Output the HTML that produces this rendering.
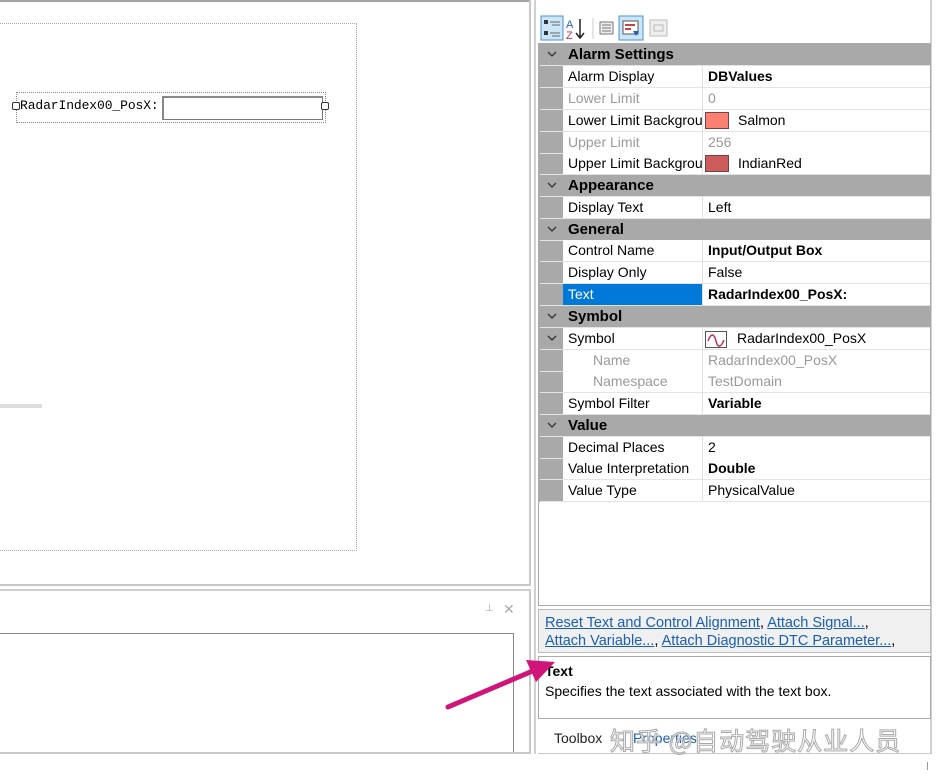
<!DOCTYPE html>
<html><head><meta charset="utf-8"><style>
*{margin:0;padding:0;box-sizing:border-box}
body{width:942px;height:777px;background:#fff;position:relative;overflow:hidden;font-family:"Liberation Sans",sans-serif;font-size:14px;color:#000}
.a{position:absolute}
.row{position:absolute;left:540px;width:390px;height:22px;border-bottom:1px solid #e4e4e4}
.hdr{background:#a9a9a9;font-weight:bold;font-size:15px}
.hdr .t{position:absolute;left:28px;top:2px}
.row .chev{position:absolute;left:5px;top:3px;width:14px;height:14px}
.n{position:absolute;left:23px;width:140px;height:21px;background:#fff;padding:2px 0 0 5px;white-space:nowrap;overflow:hidden;border-right:1px solid #e0e0e0}
.v{position:absolute;left:163px;width:227px;height:21px;background:#fff;padding:2px 0 0 5px;white-space:nowrap}
.g{color:#9a9a9a}
.b{font-weight:bold}
.sw{display:inline-block;width:24px;height:17px;border:1px solid #7a4040;vertical-align:-4px;margin:0 9px 0 -3px}
a{color:#1a5fb4;text-decoration:underline}
</style></head><body>
<svg width="0" height="0" style="position:absolute"><defs><symbol id="cv" viewBox="0 0 14 14"><path d="M3 5l4 4 4-4" stroke="#333" stroke-width="1.3" fill="none"/></symbol></defs></svg>
<!-- left area -->
<div class="a" style="left:0;top:0;width:531px;height:2px;background:#a3a3a3"></div>
<div class="a" style="left:529px;top:0;width:2px;height:585px;background:#c8c8c8"></div>
<div class="a" style="left:0;top:23px;width:357px;height:528px;border:1px dotted #aaa;border-left:none"></div>
<div class="a" style="left:16px;top:92px;width:310px;height:31px;border:1px dotted #888"></div>
<div class="a" style="left:12px;top:102px;width:8px;height:8px;border:1px solid #333;border-radius:2px;background:#fff"></div>
<div class="a" style="left:20px;top:98px;font-family:'Liberation Mono',monospace;font-size:13px;letter-spacing:-0.1px">RadarIndex00_PosX:</div>
<div class="a" style="left:162px;top:96px;width:161px;height:24px;border:1px solid #777;border-left:2px solid #888;border-top:2px solid #888"></div>
<div class="a" style="left:321px;top:102px;width:8px;height:8px;border:1px solid #333;border-radius:2px;background:#fff"></div>
<div class="a" style="left:0;top:404px;width:42px;height:4px;background:#ddd"></div>
<div class="a" style="left:0;top:584px;width:531px;height:2px;background:#c8c8c8"></div>
<div class="a" style="left:0;top:589px;width:531px;height:2px;background:#d0d0d0"></div>
<div class="a" style="left:529px;top:589px;width:2px;height:165px;background:#c8c8c8"></div>
<div class="a" style="left:485px;top:603px;font-size:10px;color:#aaa">⊥</div>
<div class="a" style="left:503px;top:601px;font-size:14px;color:#aaa">✕</div>
<div class="a" style="left:0;top:633px;width:514px;height:121px;border:1px solid #888;border-left:none"></div>
<div class="a" style="left:0;top:752px;width:531px;height:2px;background:#c8c8c8"></div>
<div class="a" style="left:534px;top:0;width:2px;height:754px;background:#d0d0d0"></div>
<!-- right panel -->
<div class="a" style="left:930px;top:0;width:2px;height:754px;background:#d0d0d0"></div>
<div class="a" style="left:538px;top:753px;width:394px;height:1px;background:#c8c8c8"></div>
<div class="a" style="left:927px;top:762px;width:1px;height:8px;background:#999"></div>
<!-- toolbar -->
<svg class="a" style="left:540px;top:15px" width="130" height="26">
<rect x="1" y="1" width="22" height="24" fill="#cde6f7" stroke="#4a90d0"/>
<rect x="4" y="5" width="4" height="4" fill="#333"/><rect x="4" y="16" width="4" height="4" fill="#333"/>
<path d="M10 7h10M12 10h8M10 18h10M12 21h8" stroke="#666"/>
<text x="26" y="13" font-size="11" fill="#2563b8" font-family="Liberation Sans">A</text><text x="26" y="24" font-size="11" fill="#c03050" font-family="Liberation Sans">Z</text>
<path d="M40 4v18M36 18l4 5 4-5" stroke="#222" fill="none" stroke-width="1.5"/>
<path d="M53 3v21" stroke="#ccc"/>
<rect x="60" y="7" width="13" height="12" fill="#eee" stroke="#777"/><path d="M62 10h9M62 13h9M62 16h9" stroke="#777"/>
<rect x="79" y="1" width="24" height="24" fill="#cde6f7" stroke="#4a90d0"/>
<rect x="83" y="6" width="15" height="13" fill="#fff" stroke="#555"/><path d="M85 10h10M85 14h6" stroke="#d04040" stroke-width="2"/><path d="M93 16l6 0-3 5z" fill="#2060c0"/>
<rect x="110" y="5" width="17" height="16" fill="#eee" stroke="#bbb"/><rect x="114" y="10" width="9" height="6" fill="none" stroke="#bbb"/>
</svg>
<div class="a" style="left:538px;top:43px;width:393px;height:563px;border:1px solid #aaa;background:#fff"></div>
<div class="a" style="left:539px;top:44px;width:24px;height:458px;background:#a9a9a9"></div>

<div class="row hdr" style="top:44px"><svg class="chev"><use href="#cv"/></svg><span class="t">Alarm Settings</span></div>
<div class="row" style="top:66px"><div class="n">Alarm Display</div><div class="v b">DBValues</div></div>
<div class="row" style="top:88px"><div class="n g">Lower Limit</div><div class="v g">0</div></div>
<div class="row" style="top:110px"><div class="n">Lower Limit Background</div><div class="v"><span class="sw" style="background:#fa8072"></span>Salmon</div></div>
<div class="row" style="top:132px"><div class="n g">Upper Limit</div><div class="v g">256</div></div>
<div class="row" style="top:153px"><div class="n">Upper Limit Background</div><div class="v"><span class="sw" style="background:#cd5c5c"></span>IndianRed</div></div>
<div class="row hdr" style="top:175px"><svg class="chev"><use href="#cv"/></svg><span class="t">Appearance</span></div>
<div class="row" style="top:197px"><div class="n">Display Text</div><div class="v">Left</div></div>
<div class="row hdr" style="top:219px"><svg class="chev"><use href="#cv"/></svg><span class="t">General</span></div>
<div class="row" style="top:240px"><div class="n">Control Name</div><div class="v b">Input/Output Box</div></div>
<div class="row" style="top:262px"><div class="n">Display Only</div><div class="v">False</div></div>
<div class="row" style="top:284px"><div class="n" style="background:#0078d7;color:#fff">Text</div><div class="v b">RadarIndex00_PosX:</div></div>
<div class="row hdr" style="top:306px"><svg class="chev"><use href="#cv"/></svg><span class="t">Symbol</span></div>
<div class="row" style="top:328px"><svg class="chev"><use href="#cv"/></svg><div class="n">Symbol</div><div class="v"><span style="display:inline-block;width:22px;height:17px;border:1px solid #555;vertical-align:-4px;margin:0 10px 0 -3px"><svg width="20" height="15"><path d="M2 9c3-8 6-8 8 0s5 6 8-1" stroke="#c03050" fill="none" stroke-width="1.5"/></svg></span>RadarIndex00_PosX</div></div>
<div class="row" style="top:350px"><div class="n g" style="padding-left:30px">Name</div><div class="v g">RadarIndex00_PosX</div></div>
<div class="row" style="top:371px"><div class="n g" style="padding-left:30px">Namespace</div><div class="v g">TestDomain</div></div>
<div class="row" style="top:393px"><div class="n">Symbol Filter</div><div class="v b">Variable</div></div>
<div class="row hdr" style="top:415px"><svg class="chev"><use href="#cv"/></svg><span class="t">Value</span></div>
<div class="row" style="top:437px"><div class="n">Decimal Places</div><div class="v">2</div></div>
<div class="row" style="top:458px"><div class="n">Value Interpretation</div><div class="v b">Double</div></div>
<div class="row" style="top:480px"><div class="n">Value Type</div><div class="v">PhysicalValue</div></div>

<div class="a" style="left:538px;top:609px;width:393px;height:44px;border:1px solid #bbb;background:#f0f0f0;padding:4px 0 0 6px;font-size:14.5px;line-height:18px;white-space:nowrap">
<a>Reset Text and Control Alignment</a>, <a>Attach Signal...</a>,<br><a>Attach Variable...</a>, <a>Attach Diagnostic DTC Parameter...</a>,</div>
<div class="a" style="left:538px;top:656px;width:393px;height:63px;border:1px solid #aaa;background:#fff;padding:4px 0 0 6px;font-size:14px;line-height:20px"><b>Text</b><br>Specifies the text associated with the text box.</div>
<div class="a" style="left:554px;top:730px;font-size:14px;color:#222">Toolbox</div>
<div class="a" style="left:633px;top:730px;font-size:14px;color:#1a5fb4">Properties</div>
<div class="a" style="left:610px;top:722px;font-family:'Noto Sans CJK SC',sans-serif;font-size:25px;color:rgba(255,255,255,0.6);-webkit-text-stroke:1px #aaa;letter-spacing:1px">知乎 @自动驾驶从业人员</div>
<!-- arrow -->
<svg class="a" style="left:440px;top:650px" width="120" height="70">
<path d="M8 57L95 20" stroke="#d0147a" stroke-width="5" stroke-linecap="round"/>
<path d="M86 10L115 12L96 32Z" fill="#d0147a"/>
</svg>
</body></html>
